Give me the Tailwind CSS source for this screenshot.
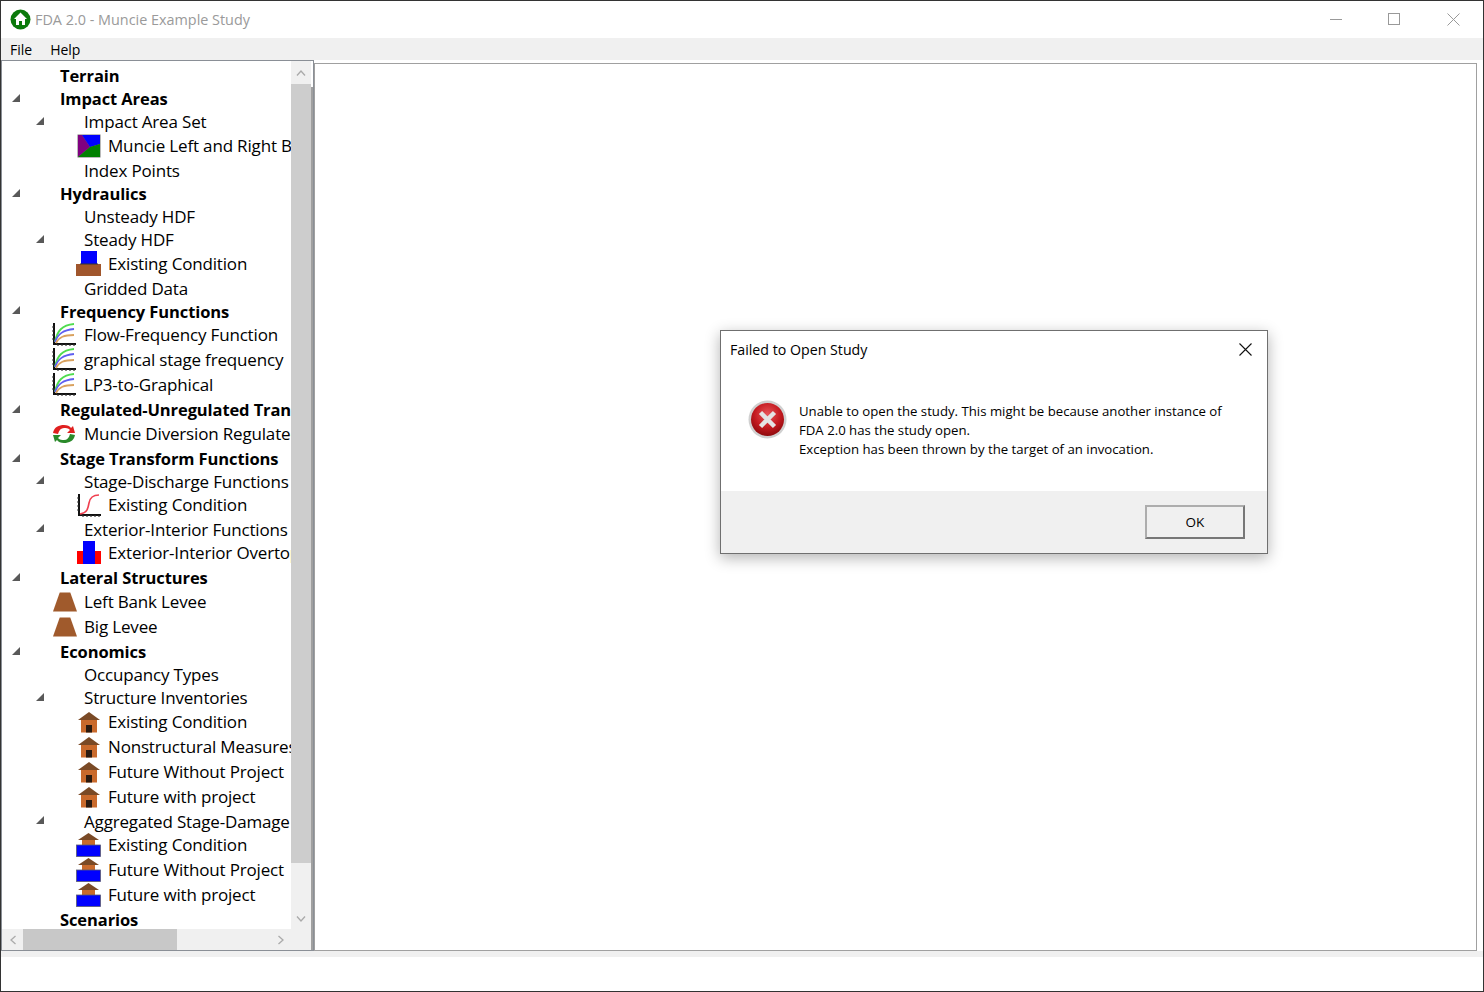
<!DOCTYPE html>
<html lang="en">
<head>
  <meta charset="UTF-8" />
  <title>FDA 2.0 - Muncie Example Study</title>
  <script src="https://cdn.jsdelivr.net/npm/@tailwindcss/browser@4"></script>
</head>
<body class="h-[992px] w-[1484px] overflow-hidden bg-white font-['Open_Sans',sans-serif] text-black">
  <!-- shared tree icons -->
  <svg class="hidden">
    <symbol id="tri" viewBox="0 0 8 8"><polygon points="8,0 8,8 0,8" fill="#595959" /></symbol>
    <symbol id="curves" viewBox="0 0 24 25">
      <path d="M2 1V22H24" fill="none" stroke="#111" stroke-width="2" />
      <path d="M0 5H2M0 9H2M0 13H2M0 17H2M6 24V22M10 24V22M14 24V22M18 24V22M22 24V22" stroke="#333" stroke-width="1.2" />
      <path d="M3 20C5 9 10 3 22 2" fill="none" stroke="#4fdc4f" stroke-width="1.8" />
      <path d="M3 20C6 12 11 8 22 7" fill="none" stroke="#5f5ff0" stroke-width="1.8" />
      <path d="M4 21C7 15 12 13 22 13" fill="none" stroke="#d9a25f" stroke-width="1.8" />
    </symbol>
    <symbol id="house" viewBox="0 0 24 22">
      <path d="M1 9L12 1L23 9Z" fill="#7a4a26" />
      <rect x="4" y="9" width="16" height="12.5" fill="#c96a2c" />
      <rect x="9" y="14" width="6" height="7.5" fill="#2a1a10" />
    </symbol>
    <symbol id="househigh" viewBox="0 0 25 25">
      <path d="M2 8L12.5 1L23 8Z" fill="#7a4a26" />
      <rect x="6" y="8" width="13" height="6" fill="#c96a2c" />
      <rect x="0.5" y="13" width="24" height="11.5" fill="#0000ff" stroke="#5a5a70" stroke-width="0.8" />
    </symbol>
    <symbol id="levee" viewBox="0 0 25 21"><polygon points="7,1 18,1 25,21 0,21" fill="#a05a2c" /></symbol>
  </svg>

  <div class="flex h-full flex-col border border-[#333]">
    <!-- title bar -->
    <div class="flex h-[37px] shrink-0 items-center pl-[9px]">
      <svg class="h-[21px] w-[21px] shrink-0" viewBox="0 0 21 21">
        <circle cx="10.5" cy="10.5" r="10" fill="#0b7a0b" />
        <path d="M10.5 3.5L17 10H15V16H12V12H9V16H6V10H4Z" fill="#fff" />
      </svg>
      <span class="ml-[4px] text-[14.4px] text-[#9a9a9a]">FDA 2.0 - Muncie Example Study</span>
      <div class="ml-auto flex items-center">
        <svg class="h-[12px] w-[12px]" viewBox="0 0 12 12"><path d="M0 5.5H12" stroke="#999" /></svg>
        <svg class="ml-[46px] h-[13px] w-[13px]" viewBox="0 0 13 13"><rect x="0.5" y="0.5" width="11" height="11" fill="none" stroke="#999" /></svg>
        <svg class="ml-[46px] mr-[23px] h-[13px] w-[13px]" viewBox="0 0 13 13"><path d="M0.5 0.5L12.5 12.5M12.5 0.5L0.5 12.5" stroke="#999" /></svg>
      </div>
    </div>

    <!-- menu -->
    <div class="flex h-[22px] shrink-0 items-center gap-[18px] bg-[#f0f0f0] pl-[9px] text-[14px]">
      <span>File</span>
      <span>Help</span>
    </div>

    <div class="flex h-[891px] shrink-0">
      <!-- study tree -->
      <div class="flex h-full w-[313px] shrink-0 border border-[#8a8f96] bg-white">
        <div class="flex w-[309px] shrink-0 flex-col">
          <div class="flex h-[868px] shrink-0">
            <div class="w-[289px] shrink-0 overflow-hidden whitespace-nowrap pt-[3px] text-[17px] leading-[23px] tracking-[-0.17px]">
              <div class="flex h-[23px] items-center pl-[58px] text-[16.5px] font-bold tracking-[-0.1px]">Terrain</div>
              <div class="flex h-[23px] items-center pl-[10px] text-[16.5px] font-bold tracking-[-0.1px]"><svg class="mb-[2px] mr-[40px] h-[8px] w-[8px] shrink-0"><use href="#tri" /></svg>Impact Areas</div>
              <div class="flex h-[23px] items-center pl-[34px]"><svg class="mb-[2px] mr-[40px] h-[8px] w-[8px] shrink-0"><use href="#tri" /></svg>Impact Area Set</div>
              <div class="flex h-[26px] items-center pb-[1px] pl-[75px]">
                <svg class="mr-[7px] h-[24px] w-[24px] shrink-0" viewBox="0 0 24 24">
                  <rect x="0.5" y="0.5" width="23" height="23" fill="#777" />
                  <polygon points="1,1 1,23 13,13 5,1" fill="#800080" />
                  <polygon points="5,1 23,1 23,10 13,13" fill="#0000ff" />
                  <polygon points="1,23 23,23 23,10 13,13" fill="#008000" />
                </svg>Muncie Left and Right Bank
              </div>
              <div class="flex h-[23px] items-center pl-[82px]">Index Points</div>
              <div class="flex h-[23px] items-center pl-[10px] text-[16.5px] font-bold tracking-[-0.1px]"><svg class="mb-[2px] mr-[40px] h-[8px] w-[8px] shrink-0"><use href="#tri" /></svg>Hydraulics</div>
              <div class="flex h-[23px] items-center pl-[82px]">Unsteady HDF</div>
              <div class="flex h-[23px] items-center pl-[34px]"><svg class="mb-[2px] mr-[40px] h-[8px] w-[8px] shrink-0"><use href="#tri" /></svg>Steady HDF</div>
              <div class="flex h-[26px] items-center pb-[1px] pl-[74px]">
                <svg class="mr-[7px] h-[25px] w-[25px] shrink-0" viewBox="0 0 25 25">
                  <rect x="5" y="0" width="16" height="13" fill="#0000ff" />
                  <rect x="0" y="13" width="25" height="12" fill="#a0562c" />
                  <path d="M4 13H22" stroke="#333" />
                </svg>Existing Condition
              </div>
              <div class="flex h-[23px] items-center pl-[82px]">Gridded Data</div>
              <div class="flex h-[22px] items-center pl-[10px] text-[16.5px] font-bold tracking-[-0.1px]"><svg class="mb-[2px] mr-[40px] h-[8px] w-[8px] shrink-0"><use href="#tri" /></svg>Frequency Functions</div>
              <div class="flex h-[25px] items-center pl-[50px]"><svg class="mr-[8px] h-[25px] w-[24px] shrink-0"><use href="#curves" /></svg>Flow-Frequency Function</div>
              <div class="flex h-[25px] items-center pl-[50px]"><svg class="mr-[8px] h-[25px] w-[24px] shrink-0"><use href="#curves" /></svg>graphical stage frequency</div>
              <div class="flex h-[26px] items-center pb-[1px] pl-[50px]"><svg class="mr-[8px] h-[25px] w-[24px] shrink-0"><use href="#curves" /></svg>LP3-to-Graphical</div>
              <div class="flex h-[23px] items-center pl-[10px] text-[16.5px] font-bold tracking-[-0.1px]"><svg class="mb-[2px] mr-[40px] h-[8px] w-[8px] shrink-0"><use href="#tri" /></svg>Regulated-Unregulated Transform</div>
              <div class="flex h-[26px] items-center pb-[1px] pl-[50px]">
                <svg class="mr-[8px] h-[24px] w-[24px] shrink-0" viewBox="0 0 24 24">
                  <path d="M1 11C2 5 7 3 12 3C15 3 18 4 19 6L21 4L23 11L15 11L18 8C16 6 14 6 12 6C9 6 7 8 6 12Z" fill="#e02020" />
                  <path d="M23 13C22 19 17 21 12 21C9 21 6 20 5 18L3 20L1 13L9 13L6 16C8 18 10 18 12 18C15 18 17 16 18 12Z" fill="#2a8a2a" />
                </svg>Muncie Diversion Regulated
              </div>
              <div class="flex h-[23px] items-center pl-[10px] text-[16.5px] font-bold tracking-[-0.1px]"><svg class="mb-[2px] mr-[40px] h-[8px] w-[8px] shrink-0"><use href="#tri" /></svg>Stage Transform Functions</div>
              <div class="flex h-[22px] items-center pl-[34px]"><svg class="mb-[2px] mr-[40px] h-[8px] w-[8px] shrink-0"><use href="#tri" /></svg>Stage-Discharge Functions</div>
              <div class="flex h-[26px] items-center pb-[1px] pl-[75px]">
                <svg class="mr-[7px] h-[24px] w-[24px] shrink-0" viewBox="0 0 24 24">
                  <path d="M2 1V22H24" fill="none" stroke="#111" stroke-width="2" />
                  <path d="M0 5H2M0 9H2M0 13H2M0 17H2M6 24V22M10 24V22M14 24V22M18 24V22M22 24V22" stroke="#333" stroke-width="1.2" />
                  <path d="M3 21C10 20 11 16 12 10C13 4 16 2 22 2" fill="none" stroke="#f04050" stroke-width="1.6" />
                </svg>Existing Condition
              </div>
              <div class="flex h-[22px] items-center pl-[34px]"><svg class="mb-[2px] mr-[40px] h-[8px] w-[8px] shrink-0"><use href="#tri" /></svg>Exterior-Interior Functions</div>
              <div class="flex h-[26px] items-center pb-[1px] pl-[75px]">
                <svg class="mr-[7px] h-[24px] w-[24px] shrink-0" viewBox="0 0 24 24">
                  <rect x="0" y="10" width="24" height="13" fill="#ff0000" />
                  <rect x="6" y="0" width="12" height="23" fill="#0000ff" />
                </svg>Exterior-Interior Overtop
              </div>
              <div class="flex h-[23px] items-center pl-[10px] text-[16.5px] font-bold tracking-[-0.1px]"><svg class="mb-[2px] mr-[40px] h-[8px] w-[8px] shrink-0"><use href="#tri" /></svg>Lateral Structures</div>
              <div class="flex h-[25px] items-center pl-[51px]"><svg class="mr-[7px] h-[21px] w-[24px] shrink-0"><use href="#levee" /></svg>Left Bank Levee</div>
              <div class="flex h-[26px] items-center pb-[1px] pl-[51px]"><svg class="mr-[7px] h-[21px] w-[24px] shrink-0"><use href="#levee" /></svg>Big Levee</div>
              <div class="flex h-[23px] items-center pl-[10px] text-[16.5px] font-bold tracking-[-0.1px]"><svg class="mb-[2px] mr-[40px] h-[8px] w-[8px] shrink-0"><use href="#tri" /></svg>Economics</div>
              <div class="flex h-[23px] items-center pl-[82px]">Occupancy Types</div>
              <div class="flex h-[23px] items-center pl-[34px]"><svg class="mb-[2px] mr-[40px] h-[8px] w-[8px] shrink-0"><use href="#tri" /></svg>Structure Inventories</div>
              <div class="flex h-[25px] items-center pl-[75px]"><svg class="mr-[7px] h-[22px] w-[24px] shrink-0"><use href="#house" /></svg>Existing Condition</div>
              <div class="flex h-[25px] items-center pl-[75px]"><svg class="mr-[7px] h-[22px] w-[24px] shrink-0"><use href="#house" /></svg>Nonstructural Measures</div>
              <div class="flex h-[25px] items-center pl-[75px]"><svg class="mr-[7px] h-[22px] w-[24px] shrink-0"><use href="#house" /></svg>Future Without Project</div>
              <div class="flex h-[26px] items-center pb-[1px] pl-[75px]"><svg class="mr-[7px] h-[22px] w-[24px] shrink-0"><use href="#house" /></svg>Future with project</div>
              <div class="flex h-[22px] items-center pl-[34px]"><svg class="mb-[2px] mr-[40px] h-[8px] w-[8px] shrink-0"><use href="#tri" /></svg>Aggregated Stage-Damage</div>
              <div class="flex h-[25px] items-center pl-[74px]"><svg class="mr-[7px] h-[25px] w-[25px] shrink-0"><use href="#househigh" /></svg>Existing Condition</div>
              <div class="flex h-[25px] items-center pl-[74px]"><svg class="mr-[7px] h-[25px] w-[25px] shrink-0"><use href="#househigh" /></svg>Future Without Project</div>
              <div class="flex h-[26px] items-center pb-[1px] pl-[74px]"><svg class="mr-[7px] h-[25px] w-[25px] shrink-0"><use href="#househigh" /></svg>Future with project</div>
              <div class="flex h-[23px] items-center pl-[58px] text-[16.5px] font-bold tracking-[-0.1px]">Scenarios</div>
            </div>
            <!-- vertical scrollbar -->
            <div class="flex w-[20px] shrink-0 flex-col bg-[#f0f0f0]">
              <div class="flex h-[23px] items-center justify-center">
                <svg class="h-[6px] w-[10px]" viewBox="0 0 10 6"><path d="M1 5.5L5 1L9 5.5" fill="none" stroke="#aaa" stroke-width="1.3" /></svg>
              </div>
              <div class="h-[779px] bg-[#cdcdcd]"></div>
              <div class="mb-[7px] mt-auto flex items-center justify-center">
                <svg class="h-[6px] w-[10px]" viewBox="0 0 10 6"><path d="M1 0.5L5 5L9 0.5" fill="none" stroke="#aaa" stroke-width="1.3" /></svg>
              </div>
            </div>
          </div>
          <!-- horizontal scrollbar -->
          <div class="flex h-[21px] shrink-0 items-center bg-[#f0f0f0]">
            <div class="flex w-[21px] justify-center">
              <svg class="h-[10px] w-[6px]" viewBox="0 0 6 10"><path d="M5.5 1L1 5L5.5 9" fill="none" stroke="#aaa" stroke-width="1.3" /></svg>
            </div>
            <div class="h-full w-[154px] bg-[#c8c8c8]"></div>
            <svg class="ml-[101px] h-[10px] w-[6px]" viewBox="0 0 6 10"><path d="M0.5 1L5 5L0.5 9" fill="none" stroke="#aaa" stroke-width="1.3" /></svg>
          </div>
        </div>
        <div class="mt-[26px] w-[2px] bg-[#a0a0a0]"></div>
      </div>

      <!-- document area -->
      <div class="mr-[6px] mt-[3px] flex-1 border border-[#a0a0a0] bg-white"></div>
    </div>

    <div class="h-[6px] shrink-0 bg-[#f0f0f0]"></div>
  </div>

  <!-- error dialog -->
  <div class="absolute left-[720px] top-[330px] flex h-[224px] w-[548px] flex-col border border-[#6f6f6f] bg-white shadow-[0_4px_14px_rgba(0,0,0,0.3)]">
    <div class="flex h-[37px] shrink-0 items-center justify-between pl-[9px] pr-[15px] text-[14.2px]">
      <span>Failed to Open Study</span>
      <svg class="h-[13px] w-[13px]" viewBox="0 0 13 13"><path d="M0.5 0.5L12.5 12.5M12.5 0.5L0.5 12.5" stroke="#111" stroke-width="1.1" /></svg>
    </div>
    <div class="flex flex-1 items-start pl-[27px] pt-[33px]">
      <svg class="mt-[-1px] h-[39px] w-[39px] shrink-0" viewBox="0 0 39 39">
        <defs>
          <radialGradient id="err" cx="50%" cy="35%" r="65%">
            <stop offset="0" stop-color="#e8565a" />
            <stop offset="0.6" stop-color="#c41a20" />
            <stop offset="1" stop-color="#8f0a0e" />
          </radialGradient>
        </defs>
        <circle cx="19.5" cy="19.5" r="19" fill="#d0d0d0" />
        <circle cx="19.5" cy="19.5" r="16.5" fill="url(#err)" />
        <path d="M12.5 12.5L26.5 26.5M26.5 12.5L12.5 26.5" stroke="#e4e4e4" stroke-width="4.5" />
      </svg>
      <p class="ml-[12px] mt-[1px] text-[13.2px] leading-[19px] text-black">
        Unable to open the study. This might be because another instance of<br />
        FDA 2.0 has the study open.<br />
        Exception has been thrown by the target of an invocation.
      </p>
    </div>
    <div class="flex h-[62px] shrink-0 items-start justify-end bg-[#f0f0f0] pr-[22px] pt-[14px]">
      <button class="h-[34px] w-[100px] border-2 border-[#adadad] border-b-[#777] border-r-[#777] bg-[#f0f0f0] text-[13.5px]">OK</button>
    </div>
  </div>
</body>
</html>
